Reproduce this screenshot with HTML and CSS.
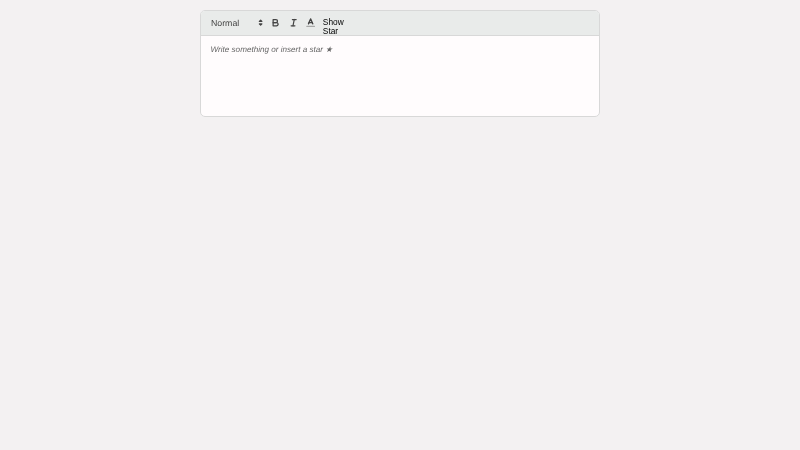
FILE: index.html
```html
<!DOCTYPE html>
<html lang="en">
<head>
    <meta charset="UTF-8">
    <title>Custom Toolbar</title>
    <link rel="stylesheet" href="styles.css">
</head>
<body>
    <div class="editor">
        <div class="toolbar">
            <span class="picker">
                <span class="picker-label">Normal</span>
                <svg class="picker-arrows" viewBox="0 0 18 18">
                    <polygon class="stroke thin" points="7 11 9 13 11 11 7 11"></polygon>
                    <polygon class="stroke thin" points="7 7 9 5 11 7 7 7"></polygon>
                </svg>
            </span>
            <button class="tool" type="button" aria-label="Bold">
                <svg viewBox="0 0 18 18">
                    <path class="stroke" d="M5,4H9.5A2.5,2.5,0,0,1,12,6.5v0A2.5,2.5,0,0,1,9.5,9H5A0,0,0,0,1,5,9V4A0,0,0,0,1,5,4Z"></path>
                    <path class="stroke" d="M5,9h5.5A2.5,2.5,0,0,1,13,11.5v0A2.5,2.5,0,0,1,10.5,14H5a0,0,0,0,1,0,0V9A0,0,0,0,1,5,9Z"></path>
                </svg>
            </button>
            <button class="tool" type="button" aria-label="Italic">
                <svg viewBox="0 0 18 18">
                    <line class="stroke" x1="7" x2="13" y1="4" y2="4"></line>
                    <line class="stroke" x1="5" x2="11" y1="14" y2="14"></line>
                    <line class="stroke" x1="8" x2="10" y1="14" y2="4"></line>
                </svg>
            </button>
            <button class="tool" type="button" aria-label="Color">
                <svg viewBox="0 0 18 18">
                    <line class="stroke underline" x1="3" x2="15" y1="15" y2="15"></line>
                    <polyline class="stroke" points="5.5 11 9 3 12.5 11"></polyline>
                    <line class="stroke" x1="11.63" x2="6.38" y1="9" y2="9"></line>
                </svg>
            </button>
            <button class="show-star" type="button">Show Star</button>
        </div>
        <div class="content">
            <p class="placeholder">Write something or insert a star ★</p>
        </div>
    </div>
</body>
</html>
```

FILE: styles.css
```css
body {
    margin: 0;
    padding: 10px 0;
    background-color: #f3f1f2;
    font-family: "Liberation Sans", Arial, sans-serif;
    text-rendering: geometricPrecision;
}

.editor {
    width: 400px;
    height: 107px;
    margin: 0 auto;
    box-sizing: border-box;
    border: 1px solid #d8d8d8;
    border-radius: 5px;
    overflow: hidden;
    background-color: #fffcfd;
    filter: blur(0.3px);
}

.toolbar {
    display: flex;
    align-items: flex-start;
    height: 25px;
    padding: 4.5px 5px 0;
    box-sizing: border-box;
    background-color: #e9ebea;
    border-bottom: 1px solid #d8d8d8;
}

.picker {
    display: flex;
    align-items: center;
    justify-content: space-between;
    flex: none;
    width: 61.25px;
    height: 15px;
    padding: 0 1.25px 0 5px;
    box-sizing: border-box;
    font-size: 8.75px;
    color: #444;
}

.picker-arrows {
    width: 11.25px;
    height: 11.25px;
}

.tool {
    display: flex;
    align-items: center;
    justify-content: center;
    flex: none;
    width: 17.5px;
    height: 15px;
    padding: 0;
    border: none;
    background: none;
}

.tool svg {
    width: 11.25px;
    height: 11.25px;
}

.stroke {
    fill: none;
    stroke: #444;
    stroke-width: 2;
    stroke-linecap: round;
    stroke-linejoin: round;
}

.thin {
    fill: #444;
}

.underline {
    opacity: 0.4;
}

.show-star {
    flex: none;
    width: 17.5px;
    height: 15px;
    padding: 2px 0 0 3.1px;
    box-sizing: border-box;
    border: none;
    background: none;
    color: #000;
    font-family: inherit;
    font-size: 8.33px;
    line-height: 9.6px;
    text-align: left;
    align-self: flex-start;
}

.content {
    padding: 7.5px 9.4px;
}

.placeholder {
    margin: 0;
    font-size: 8.125px;
    line-height: 11.5px;
    font-style: italic;
    color: #666;
}
```
